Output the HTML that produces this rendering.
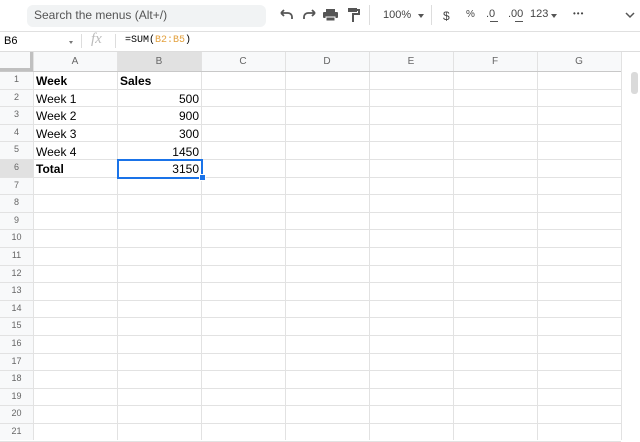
<!DOCTYPE html><html><head><style>
body{margin:0;width:640px;height:440px;overflow:hidden;background:#fff;font-family:"Liberation Sans",Arial,sans-serif;position:relative}
.a{position:absolute}
.tb{font-size:11px;color:#444}
.hl{position:absolute;left:0;width:621px;height:1px;background:#e2e2e2}
.vl{position:absolute;top:52px;bottom:0;width:1px;background:#e2e2e2}
.rn{position:absolute;left:0;width:33px;text-align:center;font-size:9px;color:#666}
.ch{position:absolute;top:52px;height:19px;line-height:19px;text-align:center;font-size:10px;color:#666}
.c{position:absolute;font-size:12px;color:#000;line-height:17px}
</style></head><body>
<div class="a" style="left:27px;top:5px;width:239px;height:22px;background:#f1f3f4;border-radius:6px"></div>
<div class="a" style="left:34px;top:8px;font-size:12px;color:#555">Search the menus (Alt+/)</div>
<svg class="a" style="left:278px;top:9px" width="40" height="12"><path d="M3 4h7a4 4 0 0 1 4 4v2M3 4l3-3M3 4l3 3" stroke="#555" stroke-width="1.8" fill="none"/><path d="M37 4h-7a4 4 0 0 0-4 4v2M37 4l-3-3M37 4l-3 3" stroke="#555" stroke-width="1.8" fill="none"/></svg>
<svg class="a" style="left:323px;top:9px" width="16" height="13"><rect x="3" y="0" width="9" height="3" fill="#555"/><rect x="0" y="3" width="15" height="6" rx="1" fill="#555"/><rect x="3" y="8" width="9" height="4" fill="#555" stroke="#fff" stroke-width="1"/></svg>
<svg class="a" style="left:348px;top:8px" width="12" height="14"><rect x="0" y="0" width="9" height="4" fill="#555"/><path d="M9 2h2v4H5v8" stroke="#555" stroke-width="2" fill="none"/></svg>
<div class="a" style="left:369px;top:5px;width:1px;height:20px;background:#ddd"></div>
<div class="a tb" style="left:383px;top:9px">100%</div>
<div class="a" style="left:418px;top:14px;border:3px solid transparent;border-top:4px solid #555"></div>
<div class="a" style="left:431px;top:5px;width:1px;height:20px;background:#ddd"></div>
<div class="a tb" style="left:443px;top:9px;font-size:12px">$</div>
<div class="a tb" style="left:466px;top:9px;font-size:10px">%</div>
<div class="a tb" style="left:486px;top:8px">.0</div>
<div class="a" style="left:490px;top:21px;width:8px;height:1px;background:#555"></div>
<div class="a tb" style="left:508px;top:8px">.00</div>
<div class="a" style="left:515px;top:21px;width:8px;height:1px;background:#555"></div>
<div class="a tb" style="left:530px;top:8px">123</div>
<div class="a" style="left:551px;top:14px;border:3px solid transparent;border-top:4px solid #555"></div>
<div class="a tb" style="left:573px;top:9px;font-size:8px;letter-spacing:1px">•••</div>
<svg class="a" style="left:625px;top:12px" width="10" height="7"><path d="M1 1l4 4 4-4" stroke="#555" stroke-width="1.5" fill="none"/></svg>
<div class="a" style="left:0;top:31px;width:640px;height:1px;background:#e0e0e0"></div>
<div class="a" style="left:4px;top:35px;font-size:11px">B6</div>
<div class="a" style="left:69px;top:41px;border:2.5px solid transparent;border-top:3px solid #777"></div>
<div class="a" style="left:81px;top:34px;width:1px;height:14px;background:#ddd"></div>
<div class="a" style="left:91px;top:31px;font-family:'Liberation Serif',serif;font-style:italic;font-size:15px;color:#bbb">fx</div>
<div class="a" style="left:115px;top:34px;width:1px;height:14px;background:#ddd"></div>
<div class="a" style="left:125px;top:35px;font-size:10px;font-family:'Liberation Mono',monospace">=SUM(<span style="color:#e3a13f">B2:B5</span>)</div>
<div class="a" style="left:0;top:51px;width:640px;height:1px;background:#ddd"></div>
<div class="a" style="left:0;top:52px;width:621px;height:19px;background:#f8f9fa"></div>
<div class="a" style="left:117px;top:52px;width:84px;height:19px;background:#e1e1e1"></div>
<div class="a" style="left:0;top:52px;width:33px;height:388px;background:#f8f9fa"></div>
<div class="a" style="left:0;top:159px;width:33px;height:18px;background:#e1e1e1"></div>
<div class="a" style="left:30px;top:52px;width:3px;height:19px;background:#c0c0c0"></div>
<div class="a" style="left:0;top:68px;width:33px;height:3px;background:#c0c0c0"></div>
<div class="ch" style="left:33px;width:84px">A</div><div class="ch" style="left:117px;width:84px">B</div><div class="ch" style="left:201px;width:84px">C</div><div class="ch" style="left:285px;width:84px">D</div><div class="ch" style="left:369px;width:84px">E</div><div class="ch" style="left:453px;width:84px">F</div><div class="ch" style="left:537px;width:84px">G</div>
<div class="vl" style="left:33px"></div><div class="vl" style="left:117px"></div><div class="vl" style="left:201px"></div><div class="vl" style="left:285px"></div><div class="vl" style="left:369px"></div><div class="vl" style="left:453px"></div><div class="vl" style="left:537px"></div><div class="vl" style="left:621px"></div>
<div class="a" style="left:621px;top:52px;width:19px;height:388px;background:#fff;border-left:1px solid #e2e2e2"></div>
<div class="a" style="left:631px;top:72px;width:7px;height:22px;background:#dadada;border-radius:3px"></div>
<div class="hl" style="top:71px;background:#c8c8c8"></div>
<div id="rows"></div>
<script>
var h='';for(var i=0;i<21;i++){var t=71+i*17.6;h+='<div class="hl" style="top:'+(t+17.6).toFixed(1)+'px"></div><div class="rn" style="top:'+t.toFixed(1)+'px;line-height:17.6px">'+(i+1)+'</div>';}
document.getElementById('rows').innerHTML=h;
</script>
<div class="c" style="left:36px;top:73px;font-weight:bold">Week</div><div class="c" style="left:120px;top:73px;font-weight:bold">Sales</div>
<div class="c" style="left:36px;top:91px">Week 1</div><div class="c" style="left:117px;width:82px;text-align:right;top:91px">500</div>
<div class="c" style="left:36px;top:108px">Week 2</div><div class="c" style="left:117px;width:82px;text-align:right;top:108px">900</div>
<div class="c" style="left:36px;top:126px">Week 3</div><div class="c" style="left:117px;width:82px;text-align:right;top:126px">300</div>
<div class="c" style="left:36px;top:144px">Week 4</div><div class="c" style="left:117px;width:82px;text-align:right;top:144px">1450</div>
<div class="c" style="left:36px;top:161px;font-weight:bold">Total</div><div class="c" style="left:117px;width:82px;text-align:right;top:161px">3150</div>
<div class="a" style="left:117px;top:159px;width:82px;height:16px;border:2px solid #1a73e8"></div>
<div class="a" style="left:199px;top:174px;width:5px;height:5px;background:#1a73e8;border:1px solid #fff"></div>
</body></html>
